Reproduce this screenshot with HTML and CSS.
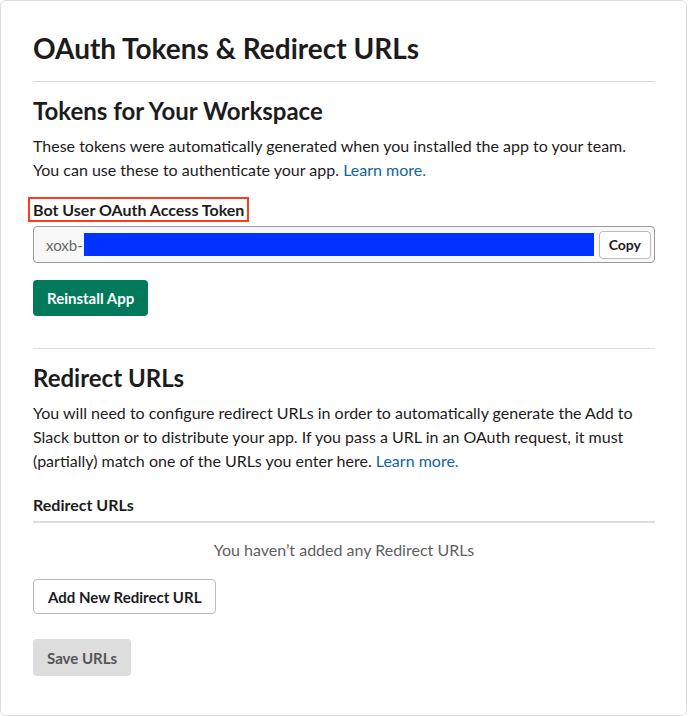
FILE: index.html
```html
<!DOCTYPE html>
<html lang="en">
<head>
<meta charset="utf-8">
<title>OAuth Tokens &amp; Redirect URLs</title>
<link rel="stylesheet" href="styles.css">
</head>
<body>
<main class="card">
  <h1 class="page-title">OAuth Tokens &amp; Redirect URLs</h1>
  <hr class="divider">
  <section class="section">
    <h2 class="section-title">Tokens for Your Workspace</h2>
    <p class="section-text">These tokens were automatically generated when you installed the app to your team. You can use these to authenticate your app. <a class="link" href="#">Learn more.</a></p>
    <div class="token-label-row"><span class="token-label">Bot User OAuth Access Token</span></div>
    <div class="token-field">
      <span class="token-prefix">xoxb-</span>
      <span class="token-redacted"></span>
      <button class="btn btn-copy" type="button">Copy</button>
    </div>
    <button class="btn btn-primary" type="button">Reinstall App</button>
  </section>
  <hr class="divider divider-section">
  <section class="section">
    <h2 class="section-title">Redirect URLs</h2>
    <p class="section-text">You will need to configure redirect URLs in order to automatically generate the Add to Slack button or to distribute your app. If you pass a URL in an OAuth request, it must (partially) match one of the URLs you enter here. <a class="link" href="#">Learn more.</a></p>
    <div class="list-header">Redirect URLs</div>
    <p class="empty-text">You haven’t added any Redirect URLs</p>
    <div class="btn-row"><button class="btn btn-outline" type="button">Add New Redirect URL</button></div>
    <div class="btn-row btn-row-save"><button class="btn btn-disabled" type="button">Save URLs</button></div>
  </section>
</main>
</body>
</html>
```
FILE: styles.css
```css
html, body {
  margin: 0;
  padding: 0;
  background: #ffffff;
}
body {
  font-family: Lato, "Open Sans", "Liberation Sans", sans-serif;
  color: #1d1c1d;
  -webkit-font-smoothing: antialiased;
}
.card {
  box-sizing: border-box;
  width: 687px;
  min-height: 716px;
  border: 1px solid #dddddd;
  border-radius: 6px;
  padding: 29px 31px 0 32px;
}
.page-title {
  margin: 0;
  font-size: 28px;
  line-height: 36px;
  font-weight: 700;
}
.divider {
  margin: 15px 0 0;
  border: 0;
  border-top: 1px solid #dddddd;
  height: 0;
}
.divider-section {
  margin-top: 32px;
}
.section {
  display: flex;
  flex-direction: column;
  align-items: flex-start;
}
.section-title {
  margin: 13px 0 0;
  font-size: 24px;
  line-height: 32px;
  font-weight: 700;
}
.section-text {
  margin: 7px 0 0;
  font-size: 16px;
  line-height: 24px;
}
.link {
  color: #1264a3;
  text-decoration: none;
}
.token-label-row {
  margin-top: 15px;
}
.token-label {
  display: inline-block;
  margin-left: -5px;
  padding: 0 3px;
  border: 2px solid #ff3b1f;
  font-size: 16px;
  line-height: 21px;
  font-weight: 700;
}
.token-field {
  box-sizing: border-box;
  align-self: stretch;
  display: flex;
  align-items: center;
  height: 37px;
  margin-top: 4px;
  padding: 0 3px 0 12px;
  background: #f8f8f8;
  border: 1px solid #9a9a9a;
  border-radius: 4px;
}
.token-prefix {
  font-size: 15px;
  color: #696969;
}
.token-redacted {
  flex: 1;
  height: 23px;
  margin-left: 1px;
  background: #0033ff;
}
.btn {
  box-sizing: border-box;
  font-family: inherit;
  font-size: 15px;
  font-weight: 700;
  border-radius: 4px;
  cursor: pointer;
}
.btn-copy {
  height: 28px;
  margin-left: 5px;
  padding: 0 9px;
  background: #ffffff;
  color: #1d1c1d;
  border: 1px solid #bbbbbb;
  font-size: 14px;
}
.btn-primary {
  height: 36px;
  margin-top: 17px;
  padding: 0 14px;
  background: #007a5a;
  color: #ffffff;
  border: 0;
}
.list-header {
  align-self: stretch;
  margin-top: 21px;
  padding-bottom: 5px;
  border-bottom: 2px solid #dddddd;
  font-size: 16px;
  line-height: 22px;
  font-weight: 700;
}
.empty-text {
  align-self: stretch;
  margin: 15px 0 0;
  text-align: center;
  font-size: 16px;
  line-height: 24px;
  color: #616061;
}
.btn-row {
  margin-top: 17px;
}
.btn-row-save {
  margin-top: 25px;
}
.btn-outline {
  height: 35px;
  padding: 0 14px;
  background: #ffffff;
  color: #1d1c1d;
  border: 1px solid #bbbbbb;
}
.btn-disabled {
  height: 37px;
  padding: 0 14px;
  background: #dddddd;
  color: #555555;
  border: 0;
  cursor: default;
}
```
